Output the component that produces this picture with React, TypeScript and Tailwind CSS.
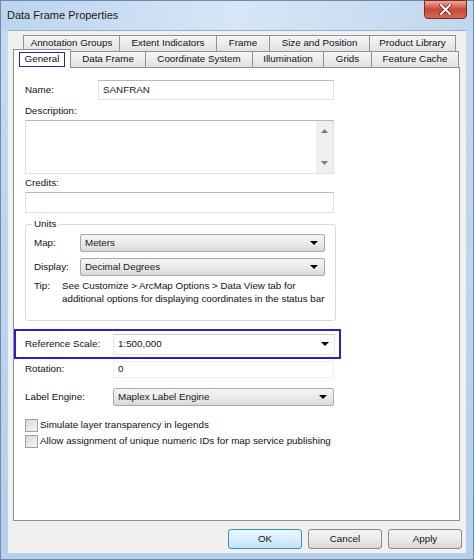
import React from 'react';

const font = "font-['Liberation_Sans',Arial,sans-serif]";

const Arrow = ({ color = '#000' }: { color?: string }) => (
  <svg width="8" height="4" viewBox="0 0 8 4">
    <path d="M0 0 H8 L4 4 Z" fill={color} />
  </svg>
);

const GraySelect = ({ value, className }: { value: string; className: string }) => (
  <div
    className={`flex items-center justify-between rounded-[2px] border border-[#a9a9a9] bg-gradient-to-b from-[#f4f4f4] via-[#ebebeb] to-[#d8d8d8] pl-[4px] pr-[6px] text-[#1a1a1a] ${className}`}
  >
    <span>{value}</span>
    <Arrow />
  </div>
);

const TextBox = ({ value, className }: { value?: string; className: string }) => (
  <div
    className={`flex items-center border border-[#dde1e6] border-t-[#b5b8bf] bg-white pl-[4px] text-[#1a1a1a] ${className}`}
  >
    {value}
  </div>
);

const BackTab = ({ label, w }: { label: string; w: string }) => (
  <div
    className={`-ml-px flex h-[16px] items-center justify-center border border-b-0 border-[#8e9196] bg-gradient-to-b from-[#f5f5f5] to-[#e2e2e2] ${w}`}
  >
    {label}
  </div>
);

const Button = ({ label, primary }: { label: string; primary?: boolean }) => (
  <div
    className={`flex h-[20px] w-[74px] items-center justify-center rounded-[3px] border ${
      primary
        ? 'border-[#3c8ec9] bg-gradient-to-b from-[#eaf6fd] via-[#d9eefb] to-[#bee3f8]'
        : 'border-[#8a8a8a] bg-gradient-to-b from-[#f3f3f3] via-[#ebebeb] to-[#d7d7d7]'
    }`}
  >
    {label}
  </div>
);

const CheckRow = ({ label }: { label: string }) => (
  <div className="flex h-[13px] items-center gap-[2px]">
    <div className="h-[13px] w-[13px] border border-[#a0a0a0] bg-gradient-to-br from-[#d8d8d8] to-[#f6f6f6]" />
    <span>{label}</span>
  </div>
);

export default function App() {
  return (
    <div
      className={`${font} flex h-[560px] w-[474px] flex-col border border-[#6e8aae] bg-gradient-to-b from-[#c4daf1] to-[#b6cfea] text-[9.8px] text-[#111]`}
    >
      {/* title bar */}
      <div className="relative flex h-[29px] items-center bg-gradient-to-r from-[#bcd4ee] via-[#d6e6f6] to-[#c0d6ee] pl-[6px]">
        <span className="text-[11px] text-[#1b1b1b]">Data Frame Properties</span>
        <div className="absolute right-[6px] top-[-1px] flex h-[19px] w-[43px] items-center justify-center rounded-b-[4px] border border-[#7a2a25] bg-gradient-to-b from-[#e9a99a] via-[#c9463a] to-[#d56a50]">
          <svg width="13" height="11" viewBox="0 0 13 11">
            <path d="M2 1 L11 10 M11 1 L2 10" stroke="#5a1a14" strokeWidth="3.4" strokeLinecap="round" />
            <path d="M2 1 L11 10 M11 1 L2 10" stroke="#ffffff" strokeWidth="2" strokeLinecap="round" />
          </svg>
        </div>
      </div>

      {/* client area */}
      <div className="mx-[7px] flex h-[523px] flex-col border-t border-[#97aecb] bg-[#f0f0f0] pl-[5px] pt-[4px]">
        {/* tab rows */}
        <div className="flex h-[16px] pl-[11px]">
          <BackTab label="Annotation Groups" w="w-[97px]" />
          <BackTab label="Extent Indicators" w="w-[98px]" />
          <BackTab label="Frame" w="w-[54px]" />
          <BackTab label="Size and Position" w="w-[101px]" />
          <BackTab label="Product Library" w="w-[87px]" />
        </div>
        <div className="relative z-10 flex h-[16px]">
          <div className="-mt-[2px] flex h-[19px] w-[58px] items-center justify-center border border-b-0 border-[#8e9196] bg-white">
            <div className="flex h-[15px] w-[46px] items-center justify-center border-[1.5px] border-[#2323c9]">
              General
            </div>
          </div>
          <BackTab label="Data Frame" w="w-[76px]" />
          <BackTab label="Coordinate System" w="w-[108px]" />
          <BackTab label="Illumination" w="w-[72px]" />
          <BackTab label="Grids" w="w-[49px]" />
          <BackTab label="Feature Cache" w="w-[88px]" />
        </div>

        {/* tab panel */}
        <div className="mr-[6px] flex h-[454px] flex-col border border-[#8e9196] bg-white pl-[11px]">
          <div className="mt-[12px] flex h-[20px] items-center">
            <span className="w-[73px]">Name:</span>
            <TextBox value="SANFRAN" className="h-[20px] w-[236px]" />
          </div>

          <div className="mt-[5px] flex h-[13px] items-center">Description:</div>
          <div className="mt-[2px] flex h-[54px] w-[309px] border border-[#dde1e6] border-t-[#b5b8bf] bg-white">
            <div className="flex-1" />
            <div className="flex w-[17px] flex-col items-center justify-between bg-[#efefef] py-[8px]">
              <svg width="7" height="4" viewBox="0 0 7 4">
                <path d="M0 4 L3.5 0 L7 4 Z" fill="#7a7a7a" />
              </svg>
              <svg width="7" height="4" viewBox="0 0 7 4">
                <path d="M0 0 L7 0 L3.5 4 Z" fill="#7a7a7a" />
              </svg>
            </div>
          </div>

          <div className="mt-[3px] flex h-[13px] items-center">Credits:</div>
          <TextBox className="mt-[2px] h-[21px] w-[309px]" />

          {/* Units group */}
          <fieldset className="mt-[5px] h-[103px] w-[310px] rounded-[3px] border border-[#dadada] pl-[8px] pr-[10px]">
            <legend className="ml-[-2px] px-[2px] leading-[12px]">Units</legend>
            <div className="mt-[4px] flex h-[18px] items-center">
              <span className="w-[46px]">Map:</span>
              <GraySelect value="Meters" className="h-[18px] flex-1" />
            </div>
            <div className="mt-[6px] flex h-[18px] items-center">
              <span className="w-[46px]">Display:</span>
              <GraySelect value="Decimal Degrees" className="h-[18px] flex-1" />
            </div>
            <div className="mt-[4px] flex whitespace-nowrap leading-[12.5px]">
              <span className="w-[28px] shrink-0">Tip:</span>
              <span>
                See Customize &gt; ArcMap Options &gt; Data View tab for
                <br />
                additional options for displaying coordinates in the status bar
              </span>
            </div>
          </fieldset>

          {/* Reference scale (highlighted) */}
          <div className="-ml-[11px] mt-[8px] flex h-[30px] w-[327px] items-center border-2 border-[#2323c9] pl-[9px] pr-[4px]">
            <span className="w-[88px]">Reference Scale:</span>
            <div className="flex h-[21px] flex-1 items-center justify-between border border-[#e1e4e8] border-t-[#c4c7cc] bg-white pl-[4px] pr-[5px]">
              <span>1:500,000</span>
              <Arrow />
            </div>
          </div>

          <div className="mt-[2px] flex h-[17px] items-center">
            <span className="w-[88px]">Rotation:</span>
            <div className="flex h-[17px] w-[221px] items-center border border-[#eceef1] bg-white pl-[4px]">0</div>
          </div>

          <div className="mt-[10px] flex h-[18px] items-center">
            <span className="w-[88px]">Label Engine:</span>
            <GraySelect value="Maplex Label Engine" className="h-[18px] w-[221px]" />
          </div>

          <div className="mt-[13px] flex flex-col gap-[3px]">
            <CheckRow label="Simulate layer transparency in legends" />
            <CheckRow label="Allow assignment of unique numeric IDs for map service publishing" />
          </div>
        </div>

        {/* dialog buttons */}
        <div className="mt-[8px] flex justify-end gap-[6px] pr-[4px]">
          <Button label="OK" primary />
          <Button label="Cancel" />
          <Button label="Apply" />
        </div>
      </div>
    </div>
  );
}
